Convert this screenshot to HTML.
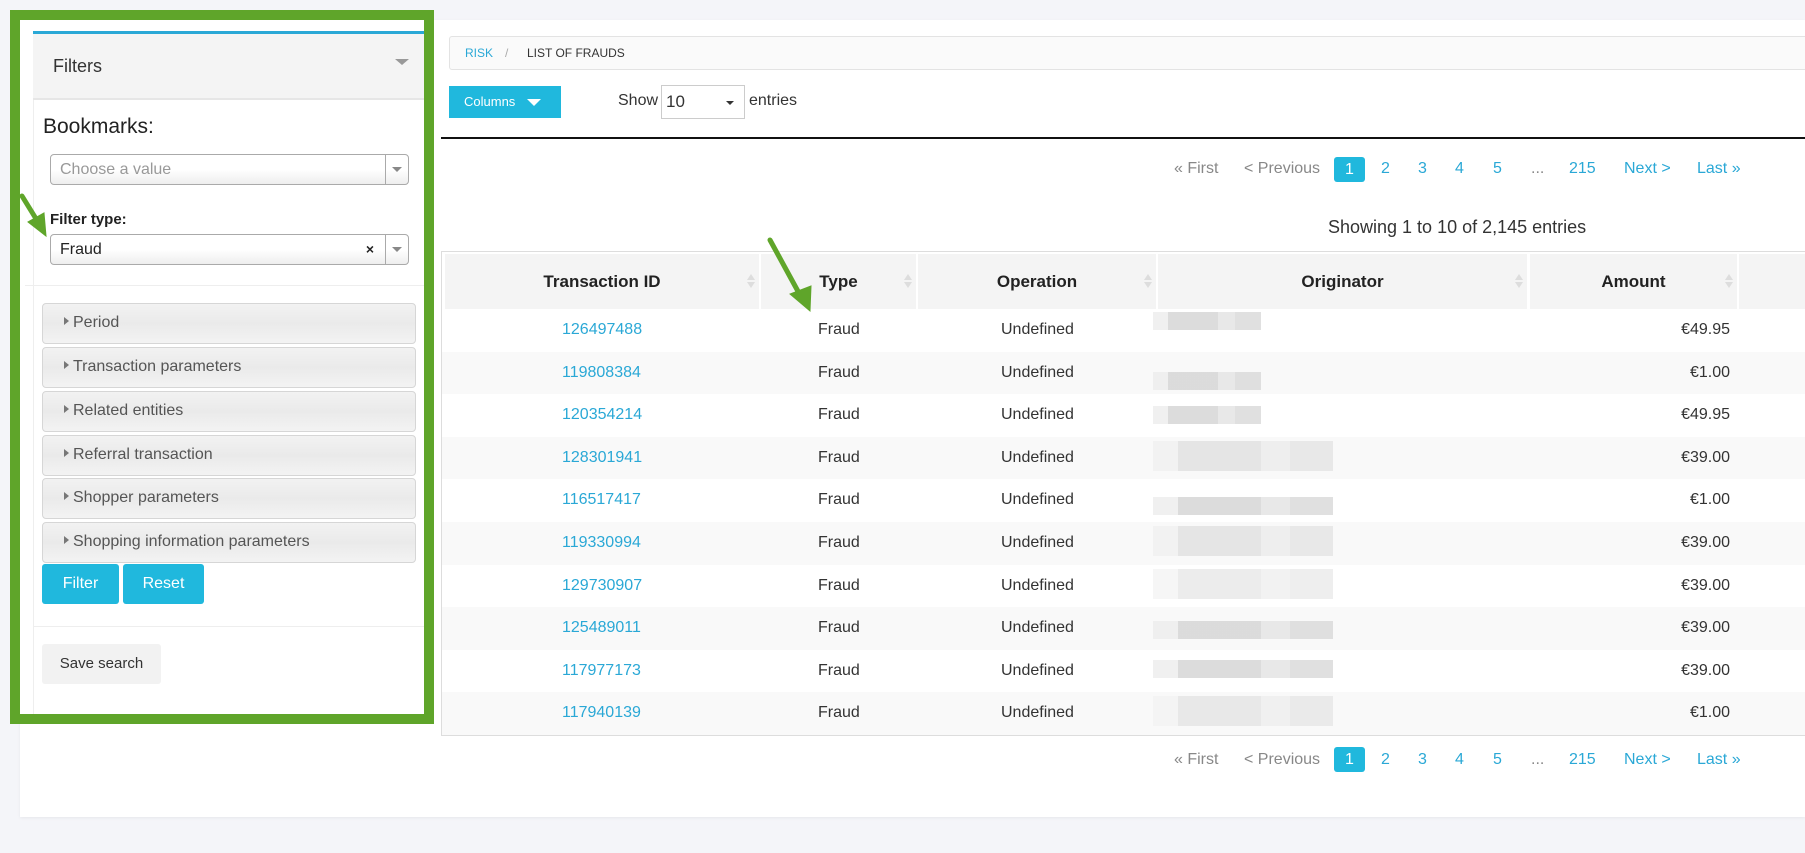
<!DOCTYPE html>
<html><head><meta charset="utf-8">
<style>
*{box-sizing:border-box;margin:0;padding:0}
body{width:1805px;height:853px;background:#f4f5f9;font-family:"Liberation Sans",sans-serif;position:relative;overflow:hidden;color:#333}
.a{position:absolute}
.card{left:20px;top:20px;width:1785px;height:797px;background:#fff;box-shadow:0 1px 3px rgba(0,0,0,.06)}
.green{left:10px;top:10px;width:424px;height:714px;border:10px solid #5fa52a}
.acc{position:absolute;left:42px;width:374px;height:41px;border:1px solid #d6d6d6;border-radius:4px;background:linear-gradient(#f2f2f2,#eaeaea 50%,#f3f3f3);font-size:16px;color:#555;padding:10px 0 0 30px}
.acc:before{content:"";position:absolute;left:21px;top:13px;border-left:5px solid #777;border-top:4px solid transparent;border-bottom:4px solid transparent}
.sel{position:absolute;left:50px;width:359px;height:31px;border:1px solid #aaa;border-radius:4px;background:linear-gradient(#fff,#fff 50%,#eee);font-size:16px;padding:6px 0 0 9px}
.sel .ar{position:absolute;right:0;top:0;width:23px;height:29px;border-left:1px solid #aaa}
.sel .ar:after{content:"";position:absolute;left:6px;top:12px;border-top:5px solid #888;border-left:5px solid transparent;border-right:5px solid transparent}
.btn{position:absolute;background:#20b8dd;color:#fff;font-size:16px;text-align:center;border-radius:3px}
.pg{position:absolute;font-size:16px;color:#2aa8d6}
.pg.g{color:#888}
th,td{font-size:16px}
.hd{position:absolute;top:254px;height:55px;background:#f4f4f4;font-weight:bold;font-size:17px;color:#222;text-align:center;line-height:55px}
.sort{position:absolute;right:8px;top:20px;width:8px;height:16px}
.sort:before{content:"";position:absolute;top:0;border-bottom:6px solid #ddd;border-left:4px solid transparent;border-right:4px solid transparent}
.sort:after{content:"";position:absolute;top:8px;border-top:6px solid #ddd;border-left:4px solid transparent;border-right:4px solid transparent}
.row{position:absolute;left:442px;width:1363px;height:42.6px;font-size:16px}
.row.s{background:#f9f9f9}
.row span{position:absolute;top:12px}
.blur{position:absolute;background:linear-gradient(90deg,#eee 0,#eee 14%,#d8d8d8 14%,#d8d8d8 60%,#e6e6e6 60%,#e6e6e6 76%,#dcdcdc 76%);opacity:.9}
</style></head><body>
<div class="a card"></div>

<!-- sidebar -->
<div class="a" style="left:33px;top:31px;width:391px;height:3px;background:#2aa8d6"></div>
<div class="a" style="left:33px;top:34px;width:391px;height:66px;background:#f4f4f4;border-bottom:2px solid #e6e6e6"></div>
<div class="a" style="left:33px;top:100px;width:1px;height:614px;background:#eee"></div>
<div class="a" style="left:53px;top:56px;font-size:18px;color:#333">Filters</div>
<div class="a" style="left:395px;top:59px;border-top:6px solid #999;border-left:7px solid transparent;border-right:7px solid transparent"></div>
<div class="a" style="left:43px;top:115px;font-size:21px;color:#222">Bookmarks:</div>
<div class="sel" style="top:154px;color:#999">Choose a value<div class="ar"></div></div>
<div class="a" style="left:50px;top:211px;font-size:15px;font-weight:bold;color:#222">Filter type:</div>
<div class="sel" style="top:234px;color:#222">Fraud<span style="position:absolute;right:34px;top:6px;font-size:14px;font-weight:bold">×</span><div class="ar"></div></div>
<div class="a" style="left:25px;top:285px;width:400px;height:1px;background:#eee"></div>
<div class="acc" style="top:303px">Period</div>
<div class="acc" style="top:347px">Transaction parameters</div>
<div class="acc" style="top:391px">Related entities</div>
<div class="acc" style="top:435px">Referral transaction</div>
<div class="acc" style="top:478px">Shopper parameters</div>
<div class="acc" style="top:522px">Shopping information parameters</div>
<div class="btn" style="left:42px;top:564px;width:77px;height:40px;line-height:40px">Filter</div>
<div class="btn" style="left:123px;top:564px;width:81px;height:40px;line-height:40px">Reset</div>
<div class="a" style="left:33px;top:626px;width:391px;height:1px;background:#eee"></div>
<div class="a" style="left:42px;top:644px;width:119px;height:40px;background:#f2f2f2;border-radius:3px;font-size:15px;line-height:40px;text-align:center;color:#333">Save search</div>
<div class="a green"></div>

<!-- breadcrumb -->
<div class="a" style="left:449px;top:36px;width:1360px;height:34px;border:1px solid #e3e3e3;border-radius:3px;background:#fafafa"></div>
<div class="a" style="left:465px;top:46px;font-size:12px;color:#2aa8d6">RISK</div>
<div class="a" style="left:505px;top:46px;font-size:12px;color:#aaa">/</div>
<div class="a" style="left:527px;top:46px;font-size:12px;color:#333">LIST OF FRAUDS</div>
<div class="btn" style="left:449px;top:86px;width:112px;height:32px;line-height:32px;font-size:13px;text-align:left;padding-left:15px;border-radius:0">Columns<span style="position:absolute;left:78px;top:13px;border-top:7px solid #fff;border-left:7px solid transparent;border-right:7px solid transparent"></span></div>
<div class="a" style="left:618px;top:92px;font-size:16px">Show</div>
<div class="a" style="left:661px;top:85px;width:84px;height:34px;border:1px solid #ccc;font-size:17px;padding:6px 0 0 4px">10<span style="position:absolute;left:64px;top:15px;border-top:4px solid #333;border-left:4px solid transparent;border-right:4px solid transparent"></span></div>
<div class="a" style="left:749px;top:92px;font-size:16px">entries</div>
<div class="a" style="left:441px;top:137px;width:1364px;height:2px;background:#111"></div>

<!-- pagination top -->
<div class="pg g" style="left:1174px;top:160px">« First</div>
<div class="pg g" style="left:1244px;top:160px">&lt; Previous</div>
<div class="a" style="left:1334px;top:157px;width:31px;height:25px;background:#20b8dd;border-radius:3px;color:#fff;font-size:16px;text-align:center;line-height:25px">1</div>
<div class="pg" style="left:1381px;top:160px">2</div>
<div class="pg" style="left:1418px;top:160px">3</div>
<div class="pg" style="left:1455px;top:160px">4</div>
<div class="pg" style="left:1493px;top:160px">5</div>
<div class="pg g" style="left:1531px;top:160px">...</div>
<div class="pg" style="left:1569px;top:160px">215</div>
<div class="pg" style="left:1624px;top:160px">Next &gt;</div>
<div class="pg" style="left:1697px;top:160px">Last »</div>
<div class="a" style="left:1328px;top:217px;font-size:18px;color:#333">Showing 1 to 10 of 2,145 entries</div>

<!-- table -->
<div class="a" style="left:441px;top:251px;width:1370px;height:485px;border:1px solid #ddd"></div>
<div class="hd" style="left:445px;width:314px">Transaction ID<i class="sort"></i></div>
<div class="hd" style="left:761px;width:155px">Type<i class="sort"></i></div>
<div class="hd" style="left:918px;width:238px">Operation<i class="sort"></i></div>
<div class="hd" style="left:1158px;width:369px">Originator<i class="sort"></i></div>
<div class="hd" style="left:1530px;width:207px">Amount<i class="sort"></i></div>
<div class="hd" style="left:1739px;width:70px"></div>

<div class="row" style="top:309px"><span style="left:120px;color:#2aa8d6">126497488</span><span style="left:376px">Fraud</span><span style="left:559px">Undefined</span><div class="blur" style="left:711px;top:3px;width:108px;height:18px"></div><span style="right:75px">€49.95</span></div>
<div class="row s" style="top:351.6px"><span style="left:120px;color:#2aa8d6">119808384</span><span style="left:376px">Fraud</span><span style="left:559px">Undefined</span><div class="blur" style="left:711px;top:20px;width:108px;height:18px"></div><span style="right:75px">€1.00</span></div>
<div class="row" style="top:394.2px"><span style="left:120px;color:#2aa8d6">120354214</span><span style="left:376px">Fraud</span><span style="left:559px">Undefined</span><div class="blur" style="left:711px;top:12px;width:108px;height:18px"></div><span style="right:75px">€49.95</span></div>
<div class="row s" style="top:436.8px"><span style="left:120px;color:#2aa8d6">128301941</span><span style="left:376px">Fraud</span><span style="left:559px">Undefined</span><div class="blur" style="left:711px;top:4px;width:180px;height:30px;opacity:.6"></div><span style="right:75px">€39.00</span></div>
<div class="row" style="top:479.4px"><span style="left:120px;color:#2aa8d6">116517417</span><span style="left:376px">Fraud</span><span style="left:559px">Undefined</span><div class="blur" style="left:711px;top:18px;width:180px;height:18px"></div><span style="right:75px">€1.00</span></div>
<div class="row s" style="top:522px"><span style="left:120px;color:#2aa8d6">119330994</span><span style="left:376px">Fraud</span><span style="left:559px">Undefined</span><div class="blur" style="left:711px;top:4px;width:180px;height:30px;opacity:.6"></div><span style="right:75px">€39.00</span></div>
<div class="row" style="top:564.6px"><span style="left:120px;color:#2aa8d6">129730907</span><span style="left:376px">Fraud</span><span style="left:559px">Undefined</span><div class="blur" style="left:711px;top:4px;width:180px;height:30px;opacity:.5"></div><span style="right:75px">€39.00</span></div>
<div class="row s" style="top:607.2px"><span style="left:120px;color:#2aa8d6">125489011</span><span style="left:376px">Fraud</span><span style="left:559px">Undefined</span><div class="blur" style="left:711px;top:14px;width:180px;height:18px"></div><span style="right:75px">€39.00</span></div>
<div class="row" style="top:649.8px"><span style="left:120px;color:#2aa8d6">117977173</span><span style="left:376px">Fraud</span><span style="left:559px">Undefined</span><div class="blur" style="left:711px;top:10px;width:180px;height:18px"></div><span style="right:75px">€39.00</span></div>
<div class="row s" style="top:692.4px"><span style="left:120px;color:#2aa8d6">117940139</span><span style="left:376px">Fraud</span><span style="left:559px">Undefined</span><div class="blur" style="left:711px;top:4px;width:180px;height:30px;opacity:.5"></div><span style="right:75px">€1.00</span></div>

<!-- pagination bottom -->
<div class="pg g" style="left:1174px;top:751px">« First</div>
<div class="pg g" style="left:1244px;top:751px">&lt; Previous</div>
<div class="a" style="left:1334px;top:747px;width:31px;height:25px;background:#20b8dd;border-radius:3px;color:#fff;font-size:16px;text-align:center;line-height:25px">1</div>
<div class="pg" style="left:1381px;top:751px">2</div>
<div class="pg" style="left:1418px;top:751px">3</div>
<div class="pg" style="left:1455px;top:751px">4</div>
<div class="pg" style="left:1493px;top:751px">5</div>
<div class="pg g" style="left:1531px;top:751px">...</div>
<div class="pg" style="left:1569px;top:751px">215</div>
<div class="pg" style="left:1624px;top:751px">Next &gt;</div>
<div class="pg" style="left:1697px;top:751px">Last »</div>

<!-- arrows -->
<svg class="a" style="left:0;top:0" width="1805" height="853">
<g stroke="#5fa52a" stroke-width="5" fill="#5fa52a" stroke-linecap="round">
<line x1="22" y1="196" x2="38" y2="222"/>
<polygon points="28,222 46,236 44,213" stroke-width="1"/>
<line x1="770" y1="240" x2="800" y2="295"/>
<polygon points="790,294 810,311 811,286" stroke-width="1"/>
</g>
</svg>
</body></html>
